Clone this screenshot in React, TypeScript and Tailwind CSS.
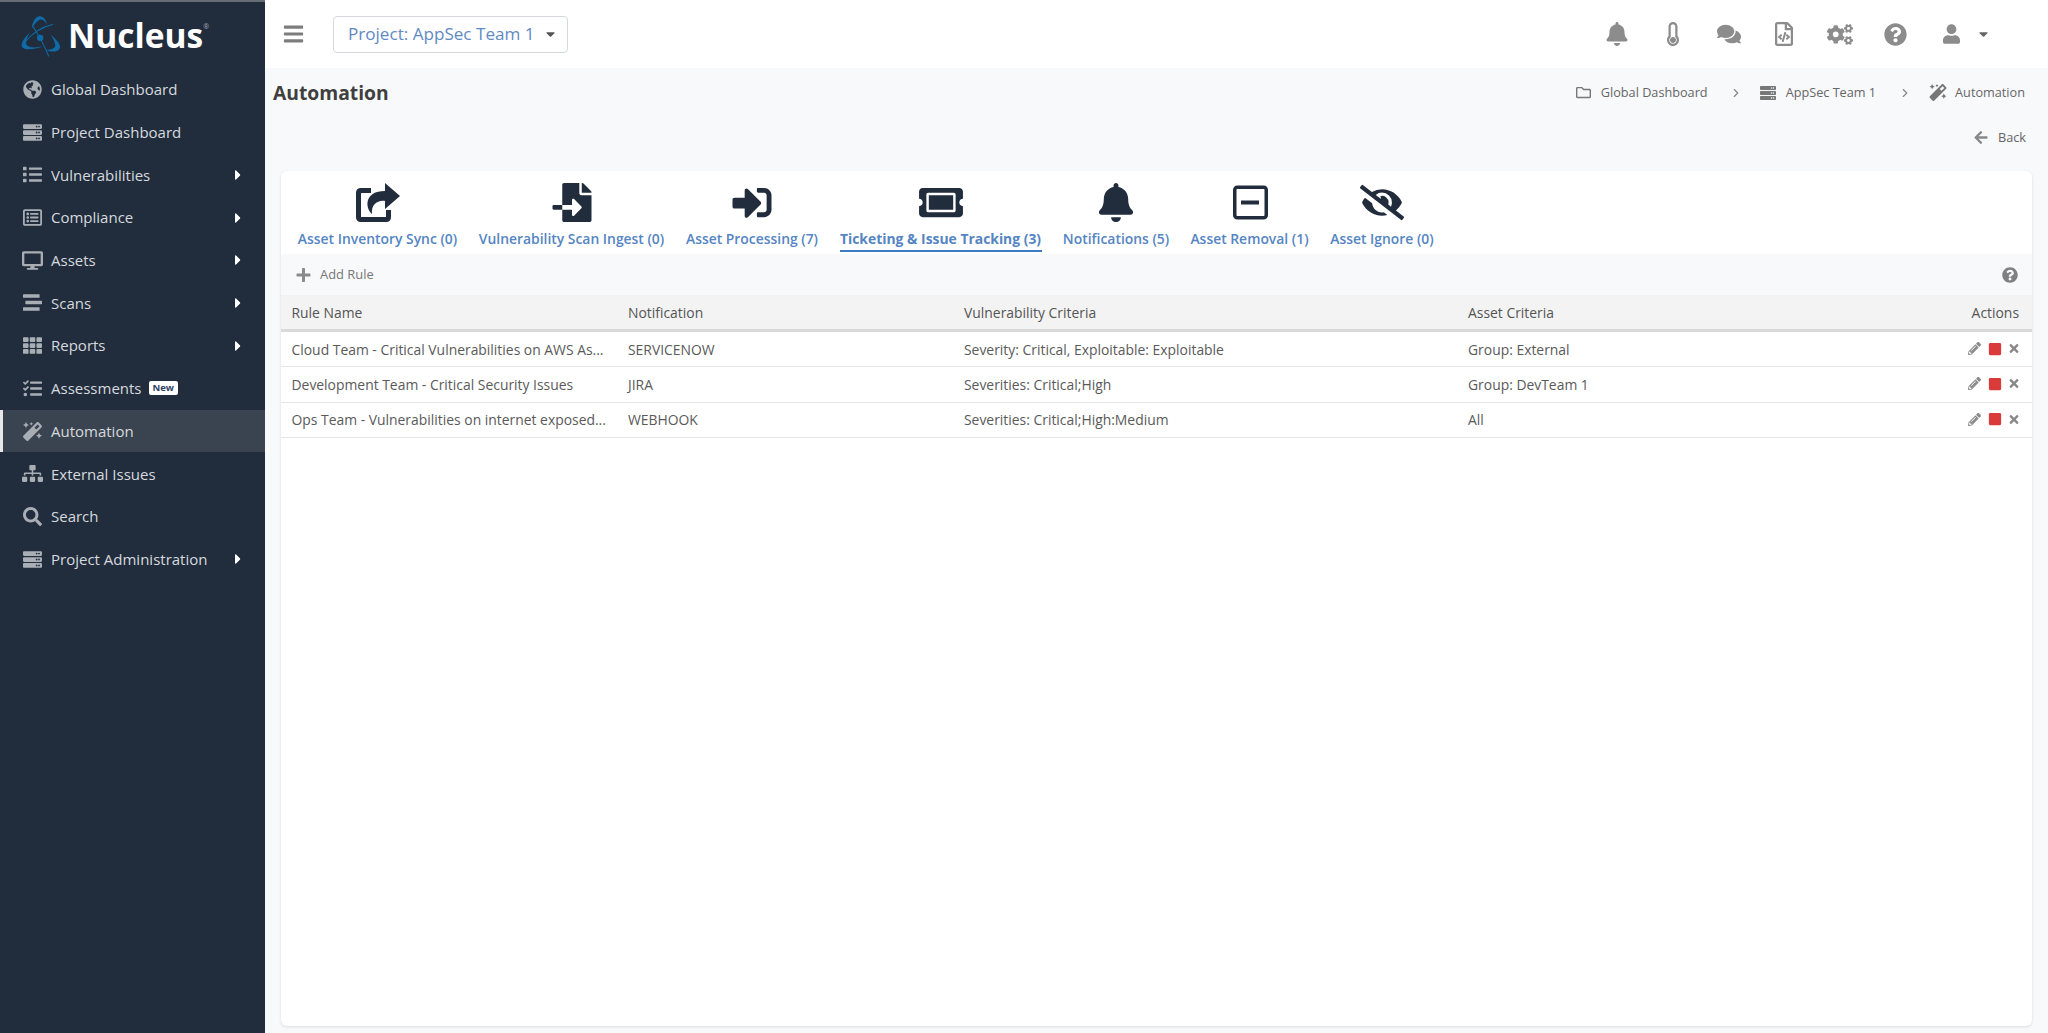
import React from "react";
import {
  FaGlobeAmericas, FaServer, FaList, FaRegListAlt, FaDesktop, FaStream, FaTh, FaTasks, FaMagic, FaSitemap, FaSearch,
  FaCaretRight, FaCaretDown, FaBell, FaThermometerEmpty, FaComments, FaRegFileCode, FaCogs, FaQuestionCircle, FaUser,
  FaBars, FaRegFolder, FaArrowLeft, FaPlus, FaPencilAlt, FaSquare, FaTimes, FaFileImport, FaSignInAlt,
  FaTicketAlt, FaEyeSlash,
} from "react-icons/fa";
import { ChevronRight } from "lucide-react";

const nav = [
  { label: "Global Dashboard", Icon: FaGlobeAmericas },
  { label: "Project Dashboard", Icon: FaServer },
  { label: "Vulnerabilities", Icon: FaList, caret: true },
  { label: "Compliance", Icon: FaRegListAlt, caret: true },
  { label: "Assets", Icon: FaDesktop, caret: true },
  { label: "Scans", Icon: FaStream, caret: true },
  { label: "Reports", Icon: FaTh, caret: true },
  { label: "Assessments", Icon: FaTasks, badge: true },
  { label: "Automation", Icon: FaMagic, active: true },
  { label: "External Issues", Icon: FaSitemap },
  { label: "Search", Icon: FaSearch },
  { label: "Project Administration", Icon: FaServer, caret: true },
];

function ShareIcon({ className }: { className?: string }) {
  return (
    <svg viewBox="0 0 44 39" className={className}>
      <path d="M15 7.5 H5 Q2.5 7.5 2.5 10 V34 Q2.5 36.5 5 36.5 H30 Q32.5 36.5 32.5 34 V27" fill="none" stroke="currentColor" strokeWidth="5" />
      <path d="M29 0 L44 13 L29 26 V18 C21 17 15 22 16 31 C9 25 8 8 29 8 Z" fill="currentColor" />
    </svg>
  );
}

function MinusBoxIcon({ className }: { className?: string }) {
  return (
    <svg viewBox="0 0 44 39" className={className}>
      <rect x="6.75" y="4.25" width="31.5" height="30.5" rx="2.5" fill="none" stroke="currentColor" strokeWidth="3.5" />
      <path d="M13 19.5 H31" stroke="currentColor" strokeWidth="4" />
    </svg>
  );
}

const tabs = [
  { label: "Asset Inventory Sync (0)", Icon: ShareIcon, w: "w-[159px]" },
  { label: "Vulnerability Scan Ingest (0)", Icon: FaFileImport, w: "w-[186px]" },
  { label: "Asset Processing (7)", Icon: FaSignInAlt, w: "w-[132px]" },
  { label: "Ticketing & Issue Tracking (3)", Icon: FaTicketAlt, w: "w-[202px]", active: true },
  { label: "Notifications (5)", Icon: FaBell, w: "w-[106px]" },
  { label: "Asset Removal (1)", Icon: MinusBoxIcon, w: "w-[118px]" },
  { label: "Asset Ignore (0)", Icon: FaEyeSlash, w: "w-[104px]" },
];

const rows = [
  ["Cloud Team - Critical Vulnerabilities on AWS As...", "SERVICENOW", "Severity: Critical, Exploitable: Exploitable", "Group: External"],
  ["Development Team - Critical Security Issues", "JIRA", "Severities: Critical;High", "Group: DevTeam 1"],
  ["Ops Team - Vulnerabilities on internet exposed...", "WEBHOOK", "Severities: Critical;High:Medium", "All"],
];

function Logo() {
  return (
    <svg viewBox="15 10 125 125" className="w-[42px] h-[42px] shrink-0">
      <g fill="#0f6ba8">
        <path d="M50 50 C52 30 62 14 74 14 C84 14 92 24 96 38 C88 26 80 22 74 24 C65 27 58 38 50 50Z" />
        <path d="M44 62 C32 74 18 90 20 102 C23 114 50 116 82 104 C60 108 40 108 34 98 C31 90 36 76 44 62Z" />
        <path d="M106 68 C120 80 136 96 134 106 C132 120 112 122 92 114 C104 114 118 110 120 102 C120 92 114 80 106 68Z" />
        <circle cx="75" cy="78" r="9.5" />
      </g>
      <g fill="none" stroke="#0f6ba8" strokeWidth="3" strokeLinecap="round">
        <path d="M32 88 C50 66 78 46 112 38" />
        <path d="M54 44 C70 70 88 100 100 132" />
      </g>
    </svg>
  );
}

export default function App() {
  return (
    <div className="flex h-[1033px] w-full overflow-hidden bg-[#f8f9fb] font-['Open_Sans','Noto_Sans',sans-serif] text-[#555]">
      <aside className="w-[265px] shrink-0 bg-[#212d3d] border-t-2 border-[#666d76]">
        <div className="h-[66px] flex items-start pl-[20px] pt-[13px] gap-[6px]">
          <Logo />
          <div className="flex items-start leading-none text-white">
            <span className="text-[33.5px] font-bold leading-[40px]">Nucleus</span>
            <span className="text-[7px] text-[#aab] mt-[8px] leading-none">®</span>
          </div>
        </div>
        <nav>
          {nav.map(({ label, Icon, caret, badge, active }) => (
            <div
              key={label}
              className={`h-[42.72px] flex items-center pl-[22px] pr-[22px] border-l-[3px] ${active ? "bg-[#3a4450] border-[#e8e8e8]" : "border-transparent"}`}
            >
              <span className="w-[26px] -ml-[3px] mr-[3px] shrink-0 flex items-center text-[#a9aeb5]">
                <Icon className="w-[21px] h-[19px]" />
              </span>
              <span className="text-[15px] text-[#d6d9dd] whitespace-nowrap">{label}</span>
              {badge && (
                <span className="ml-[7px] bg-white text-[#2f3f66] text-[9.5px] font-bold rounded-[2px] px-[4px] h-[14px] leading-[14px]">New</span>
              )}
              {caret && <FaCaretRight className="ml-auto text-white w-[10px] h-[16px]" />}
            </div>
          ))}
        </nav>
      </aside>

      <div className="flex-1 min-w-0 flex flex-col">
        <header className="h-[68px] shrink-0 bg-white flex items-center pl-[18px] pr-[59px]">
          <FaBars className="w-[21px] h-[22px] text-[#7d7d7d]" />
          <div className="ml-[29px] w-[235px] h-[37px] border border-[#d5d8dc] rounded-[4px] flex items-center pl-[14px] pr-[11px] text-[#5f8ac3] text-[17.1px] whitespace-nowrap">
            Project: AppSec Team 1
            <FaCaretDown className="ml-auto w-[11px] h-[14px] text-[#555]" />
          </div>
          <div className="ml-auto flex items-center text-[#8c8c8c]">
            <FaBell className="w-[22px] h-[24px]" />
            <FaThermometerEmpty className="ml-[38px] w-[14px] h-[24px]" />
            <FaComments className="ml-[37px] w-[24px] h-[22px]" />
            <FaRegFileCode className="ml-[33px] w-[20px] h-[24px]" />
            <FaCogs className="ml-[33px] w-[26px] h-[23px]" />
            <FaQuestionCircle className="ml-[31px] w-[23px] h-[23px]" />
            <FaUser className="ml-[36px] w-[17px] h-[22px]" />
            <FaCaretDown className="ml-[18px] w-[11px] h-[14px] text-[#666]" />
          </div>
        </header>

        <main className="flex-1 min-h-0 flex flex-col pl-[16px] pr-[16px] pb-[7px]">
          <div className="flex items-start h-[49px]">
            <h1 className="ml-[-8px] mt-[10px] text-[19.3px] font-bold leading-[30px] text-[#3f3f3f]">Automation</h1>
            <div className="ml-auto mr-[7px] mt-[15px] flex items-center text-[12.7px] text-[#666] whitespace-nowrap">
              <FaRegFolder className="w-[17px] h-[15px] text-[#777]" />
              <span className="ml-[9px]">Global Dashboard</span>
              <ChevronRight className="ml-[21px] w-[14px] h-[14px] text-[#888]" />
              <FaServer className="ml-[16px] w-[18px] h-[16px] text-[#777]" />
              <span className="ml-[9px]">AppSec Team 1</span>
              <ChevronRight className="ml-[22px] w-[14px] h-[14px] text-[#888]" />
              <FaMagic className="ml-[17px] w-[18px] h-[17px] text-[#777]" />
              <span className="ml-[8px]">Automation</span>
            </div>
          </div>
          <div className="h-[54px] flex items-start justify-end pt-[11px] pr-[6px] text-[12.7px] text-[#666]">
            <FaArrowLeft className="mt-[2px] w-[16px] h-[15px] text-[#888]" />
            <span className="ml-[9px] leading-[18px]">Back</span>
          </div>

          <section className="flex-1 min-h-0 mt-0 bg-white rounded-[6px] shadow-[0_1px_3px_rgba(0,0,0,0.12)] flex flex-col overflow-hidden">
            <div className="h-[83px] shrink-0 flex items-start pl-[17px] gap-[21.5px]">
              {tabs.map(({ label, Icon, w, active }) => (
                <div key={label} className={`${w} shrink-0 flex flex-col items-center`}>
                  <Icon className="mt-[12px] w-[44px] h-[39px] text-[#212d3d]" />
                  <div className={`mt-[7px] pb-[1px] whitespace-nowrap text-[13.9px] leading-[20px] text-[#5585c2] ${active ? "font-bold border-b-2 border-[#3d7cc2] w-full text-center" : "font-semibold"}`}>
                    {label}
                  </div>
                </div>
              ))}
            </div>

            <div className="h-[41px] shrink-0 bg-[#f8f9fb] flex items-center pl-[14px] pr-[14px] text-[12.9px] text-[#777]">
              <FaPlus className="w-[17px] h-[16px] text-[#8a8a8a]" />
              <span className="ml-[8px]">Add Rule</span>
              <FaQuestionCircle className="ml-auto w-[16px] h-[16px] text-[#808080]" />
            </div>

            <div className="h-[37px] shrink-0 bg-[#f3f3f3] border-b-[3px] border-[#d9d9d9] grid grid-cols-[336.5px_336px_504px_1fr] items-center pt-[2px] pl-[10.5px] pr-[13px] text-[13.9px] text-[#555]">
              <span>Rule Name</span>
              <span>Notification</span>
              <span>Vulnerability Criteria</span>
              <span className="flex justify-between">Asset Criteria<span>Actions</span></span>
            </div>

            {rows.map((r) => (
              <div key={r[0]} className="h-[35.3px] shrink-0 border-b border-[#e6e6e6] grid grid-cols-[336.5px_336px_504px_1fr] items-center pt-[2px] pl-[10.5px] pr-[12px] text-[13.9px] text-[#5a5a5a]">
                <span className="whitespace-nowrap">{r[0]}</span>
                <span>{r[1]}</span>
                <span>{r[2]}</span>
                <span className="flex items-center justify-between">
                  {r[3]}
                  <span className="flex items-center -mt-[3px]">
                    <FaPencilAlt className="w-[13px] h-[13px] text-[#8c8c8c]" />
                    <FaSquare className="ml-[7px] w-[14px] h-[14px] text-[#d93a3a]" />
                    <FaTimes className="ml-[6px] w-[12px] h-[13px] text-[#888]" />
                  </span>
                </span>
              </div>
            ))}
          </section>
        </main>
      </div>
    </div>
  );
}
